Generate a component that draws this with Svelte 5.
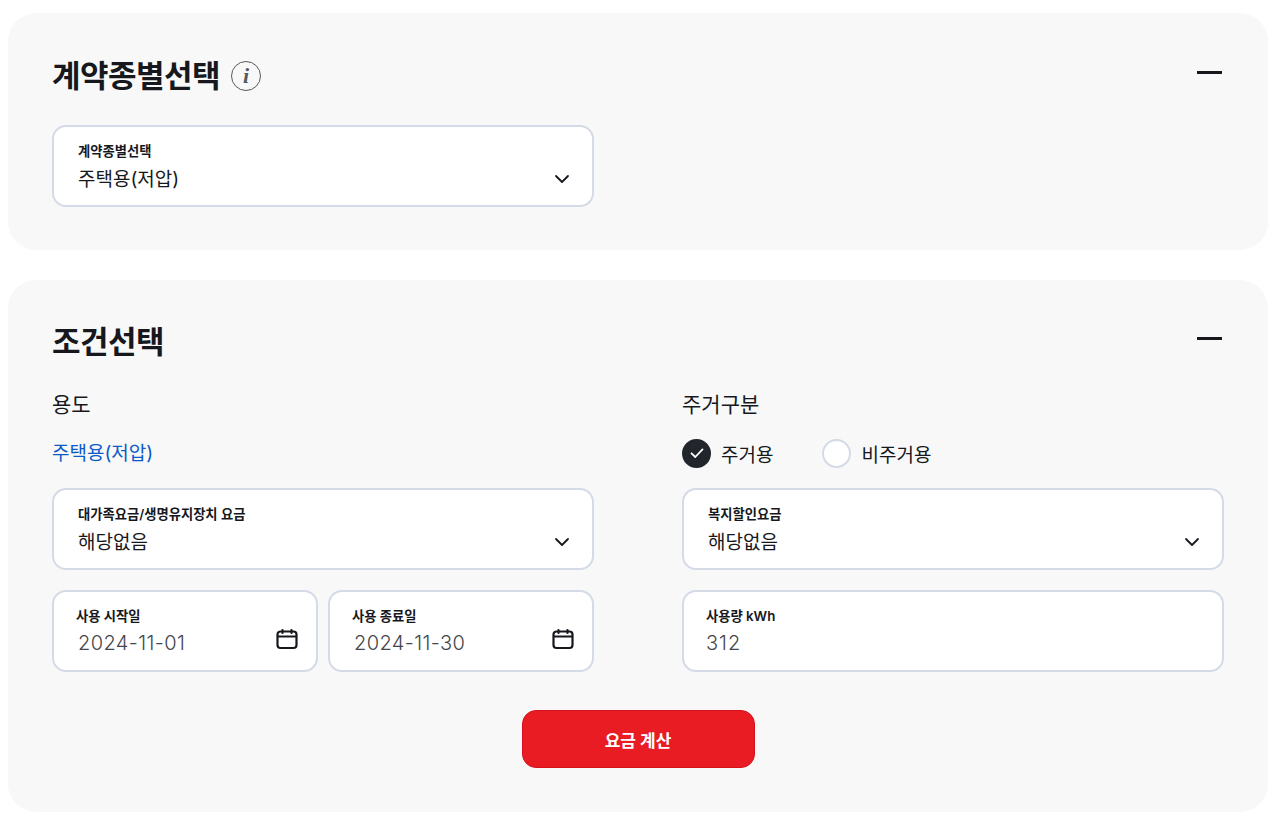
<script>
  const calendarPath = 'M3 9.5h18M7.5 3v3M16.5 3v3';
</script>

<div class="page">
  <section class="panel first">
    <header class="panel-head">
      <div class="title-wrap">
        <h2>계약종별선택</h2>
        <span class="info">i</span>
      </div>
      <span class="collapse"></span>
    </header>
    <div class="half">
      <div class="field select">
        <span class="field-label">계약종별선택</span>
        <span class="field-value">주택용(저압)</span>
        {@render chevron()}
      </div>
    </div>
  </section>

  <section class="panel second">
    <header class="panel-head">
      <div class="title-wrap">
        <h2>조건선택</h2>
      </div>
      <span class="collapse"></span>
    </header>

    <div class="columns">
      <div class="column">
        <h3>용도</h3>
        <p class="usage">주택용(저압)</p>
        <div class="field select">
          <span class="field-label">대가족요금/생명유지장치 요금</span>
          <span class="field-value">해당없음</span>
          {@render chevron()}
        </div>
        <div class="dates">
          <div class="field date">
            <span class="field-label">사용 시작일</span>
            <span class="field-value light">2024-11-01</span>
            {@render calendar()}
          </div>
          <div class="field date">
            <span class="field-label">사용 종료일</span>
            <span class="field-value light">2024-11-30</span>
            {@render calendar()}
          </div>
        </div>
      </div>

      <div class="column">
        <h3>주거구분</h3>
        <div class="radios">
          <div class="radio">
            <span class="dot on">
              <svg width="16" height="16" viewBox="0 0 16 16" fill="none">
                <path d="M2.5 8.3 6.3 12l7.2-7.6" stroke="#fff" stroke-width="1.8" stroke-linecap="round" stroke-linejoin="round" />
              </svg>
            </span>
            <span>주거용</span>
          </div>
          <div class="radio">
            <span class="dot"></span>
            <span>비주거용</span>
          </div>
        </div>
        <div class="field select">
          <span class="field-label">복지할인요금</span>
          <span class="field-value">해당없음</span>
          {@render chevron()}
        </div>
        <div class="field amount">
          <span class="field-label">사용량 kWh</span>
          <span class="field-value light">312</span>
        </div>
      </div>
    </div>

    <div class="actions">
      <button type="button">요금 계산</button>
    </div>
  </section>
</div>

{#snippet chevron()}
  <svg class="chevron" width="16" height="10" viewBox="0 0 16 10" fill="none">
    <path d="M2 2l6 6 6-6" stroke="#16181d" stroke-width="1.8" stroke-linecap="round" stroke-linejoin="round" />
  </svg>
{/snippet}

{#snippet calendar()}
  <svg class="calendar" width="24" height="24" viewBox="0 0 24 24" fill="none">
    <rect x="2.5" y="4.5" width="19" height="16.5" rx="3" stroke="#16181d" stroke-width="2.2" />
    <path d={calendarPath} stroke="#16181d" stroke-width="2.2" stroke-linecap="round" />
  </svg>
{/snippet}

<style>
  :global(body) {
    margin: 0;
    background: #fff;
    font-family: Inter, "Noto Sans CJK KR", sans-serif;
    color: #16181d;
  }

  .page {
    display: flex;
    flex-direction: column;
    gap: 30px;
    padding: 13px 12px 15px 8px;
  }

  .panel {
    background: #f8f8f8;
    border-radius: 28px;
    padding: 0 44px;
  }

  .first {
    height: 237px;
    box-sizing: border-box;
    padding-top: 43px;
  }

  .second {
    height: 532px;
    box-sizing: border-box;
    padding-top: 42px;
  }

  .panel-head {
    display: flex;
    justify-content: space-between;
    align-items: center;
    height: 40px;
  }

  .title-wrap {
    display: flex;
    align-items: center;
    gap: 11px;
  }

  h2 {
    margin: 0;
    font-size: 31px;
    line-height: 40px;
    font-weight: 700;
    letter-spacing: -0.5px;
  }

  .info {
    width: 30px;
    height: 30px;
    box-sizing: border-box;
    border: 1px solid #55585f;
    border-radius: 50%;
    display: flex;
    align-items: center;
    justify-content: center;
    font-family: "Liberation Serif", serif;
    font-style: italic;
    font-weight: 700;
    font-size: 22px;
    color: #55585f;
  }

  .collapse {
    width: 25px;
    height: 3px;
    background: #16181d;
    margin: 0 2px 8px 0;
  }

  .first .half {
    width: 542px;
    margin-top: 29px;
  }

  .columns {
    display: grid;
    grid-template-columns: 542px 542px;
    gap: 88px;
    margin-top: 28px;
  }

  .column {
    display: flex;
    flex-direction: column;
  }

  h3 {
    margin: 0;
    font-size: 21px;
    line-height: 30px;
    font-weight: 400;
  }

  .usage {
    margin: 20px 0;
    font-size: 19px;
    line-height: 28px;
    color: #0a5ac8;
  }

  .radios {
    display: flex;
    gap: 49px;
    margin: 18px 0 20px;
    height: 30px;
  }

  .radio {
    display: flex;
    align-items: center;
    gap: 10px;
    font-size: 19px;
  }

  .dot {
    width: 29px;
    height: 29px;
    box-sizing: border-box;
    border-radius: 50%;
    background: #fff;
    border: 2px solid #d4dae6;
    display: flex;
    align-items: center;
    justify-content: center;
  }

  .dot.on {
    background: #23252c;
    border-color: #23252c;
  }

  .field {
    position: relative;
    box-sizing: border-box;
    height: 82px;
    background: #fff;
    border: 2px solid #d4dae6;
    border-radius: 14px;
    padding: 15px 24px 0;
    display: flex;
    flex-direction: column;
  }

  .column > .field + .field,
  .dates {
    margin-top: 20px;
  }

  .field-label {
    font-size: 13.3px;
    line-height: 18px;
    font-weight: 600;
  }

  .field-value {
    font-size: 19px;
    line-height: 28px;
    margin-top: 6px;
  }

  .light {
    color: #44464c;
    font-size: 20px;
    font-weight: 300;
    margin-top: 4px;
    margin-left: 2px;
    letter-spacing: 0.4px;
  }

  .chevron {
    position: absolute;
    right: 22px;
    top: 47px;
  }

  .calendar {
    position: absolute;
    right: 17px;
    top: 35px;
  }

  .dates {
    display: grid;
    grid-template-columns: 1fr 1fr;
    gap: 10px;
  }

  .date {
    padding-left: 22px;
  }

  .amount {
    padding-left: 22px;
  }

  .amount .light {
    margin-left: 0;
    letter-spacing: 1px;
  }

  .actions {
    display: flex;
    justify-content: center;
    margin-top: 38px;
  }

  button {
    width: 233px;
    height: 58px;
    background: #e91c24;
    border: 1px solid #d5121c;
    border-radius: 14px;
    color: #fff;
    font: inherit;
    font-size: 17px;
    font-weight: 700;
  }
</style>
